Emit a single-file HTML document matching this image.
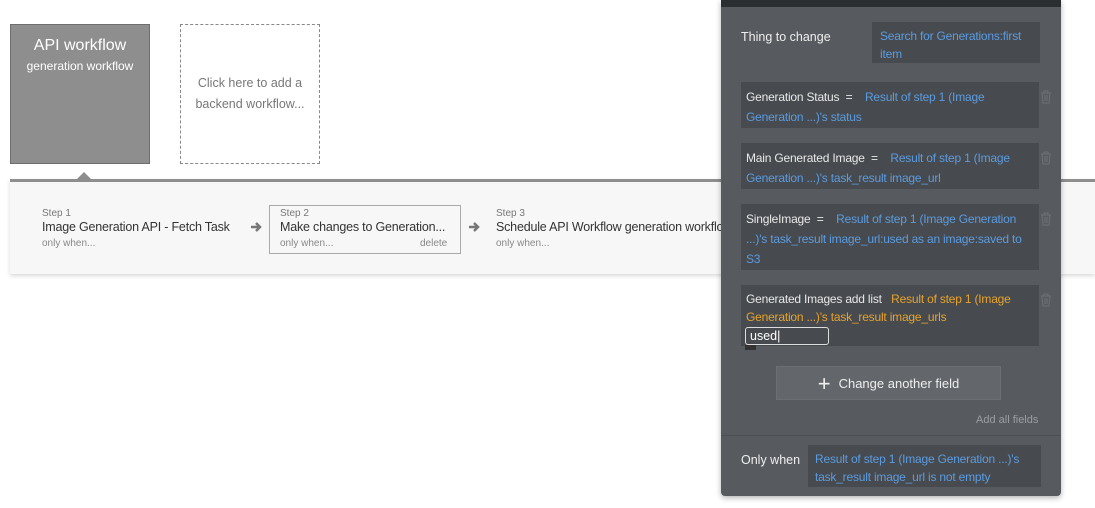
<!DOCTYPE html>
<html><head><style>
*{margin:0;padding:0;box-sizing:border-box}
body{width:1095px;height:508px;background:#fff;position:relative;overflow:hidden;font-family:"Liberation Sans",sans-serif;}
.a{position:absolute}
.blue{color:#5b9be0}
.row{position:absolute;left:741px;width:298px;background:#474b4f;color:#e8e8e8;font-size:12px;letter-spacing:-0.2px;line-height:20px;padding:5px 4px 0 5px}
.trash{position:absolute;left:1040px;width:12px;height:14px}
</style></head><body>
<div class="a" style="left:10px;top:24px;width:140px;height:140px;background:#8e8e8e;border:1px solid #6e6e6e;color:#fff;text-align:center">
<div style="font-size:16px;margin-top:12px">API workflow</div>
<div style="font-size:12px;margin-top:4px">generation workflow</div></div>
<div class="a" style="left:180px;top:24px;width:140px;height:140px;border:1px dashed #888;color:#777;text-align:center;font-size:12.5px;line-height:21px;padding-top:48px">Click here to add a<br>backend workflow...</div>
<div class="a" style="left:76px;top:172px;width:0;height:0;border-left:8px solid transparent;border-right:8px solid transparent;border-bottom:8px solid #8e8e8e"></div>
<div class="a" style="left:10px;top:179px;width:1085px;height:95px;background:#f7f7f7;border-top:3px solid #8e8e8e;box-shadow:0 2px 4px rgba(0,0,0,.15)"></div>
<div class="a" style="left:42px;top:208px;color:#777;font-size:10px">Step 1</div>
<div class="a" style="left:42px;top:220px;color:#333;font-size:12.5px;letter-spacing:-0.2px">Image Generation API - Fetch Task</div>
<div class="a" style="left:42px;top:238px;color:#888;font-size:10px">only when...</div>
<svg class="a" style="left:250px;top:221px" width="13" height="12" viewBox="0 0 13 12"><path d="M1 6h8M6 2l4 4-4 4" stroke="#777" stroke-width="2.5" fill="none"/></svg>
<div class="a" style="left:269px;top:205px;width:192px;height:49px;border:1px solid #aaa"></div>
<div class="a" style="left:280px;top:208px;color:#777;font-size:10px">Step 2</div>
<div class="a" style="left:280px;top:220px;color:#333;font-size:12.5px;letter-spacing:-0.2px">Make changes to Generation...</div>
<div class="a" style="left:280px;top:238px;color:#888;font-size:10px">only when...</div>
<div class="a" style="left:420px;top:238px;color:#888;font-size:10px">delete</div>
<svg class="a" style="left:468px;top:221px" width="13" height="12" viewBox="0 0 13 12"><path d="M1 6h8M6 2l4 4-4 4" stroke="#777" stroke-width="2.5" fill="none"/></svg>
<div class="a" style="left:496px;top:208px;color:#777;font-size:10px">Step 3</div>
<div class="a" style="left:496px;top:220px;color:#333;font-size:12.5px;letter-spacing:-0.2px;white-space:nowrap">Schedule API Workflow generation workflow</div>
<div class="a" style="left:496px;top:238px;color:#888;font-size:10px">only when...</div>

<div class="a" style="left:721px;top:0;width:340px;height:496px;background:#575b5f;border-radius:0 0 4px 4px;box-shadow:0 2px 6px rgba(0,0,0,.3)">
<div style="height:7px;background:#2b2e31"></div></div>
<div class="a" style="left:741px;top:30px;color:#eee;font-size:12.5px">Thing to change</div>
<div class="a blue" style="left:872px;top:22px;width:168px;height:41px;background:#474b4f;font-size:12px;letter-spacing:-0.2px;line-height:18px;padding:5px 4px 5px 8px">Search for Generations:first item</div>

<div class="row" style="top:82px;height:46px">Generation Status &nbsp;= &nbsp;&nbsp; <span class="blue">Result of step 1 (Image Generation ...)'s status</span></div>
<div class="row" style="top:143px;height:46px">Main Generated Image &nbsp;= &nbsp;&nbsp; <span class="blue">Result of step 1 (Image Generation ...)'s task_result image_url</span></div>
<div class="row" style="top:204px;height:66px">SingleImage &nbsp;= &nbsp;&nbsp; <span class="blue">Result of step 1 (Image Generation ...)'s task_result image_url:used as an image:saved to S3</span></div>
<div class="row" style="top:285px;height:61px;line-height:18px;padding-top:5px">Generated Images add list &nbsp;&nbsp;<span style="color:#e8a32a">Result of step 1 (Image Generation ...)'s task_result image_urls</span></div>
<div class="a" style="left:745px;top:327px;width:84px;height:18px;border:1px solid #ddd;border-radius:3px;color:#fff;font-size:12.5px;padding-left:4px;line-height:16px">used|</div>
<div class="a" style="left:745px;top:345px;width:11px;height:5px;background:#333"></div>
<svg class="trash" style="top:90px" viewBox="0 0 12 14"><path d="M1 3h10M4 3V1h4v2M2 3l1 10h6l1-10M5 5v6M7 5v6" stroke="#6d7175" fill="none"/></svg>
<svg class="trash" style="top:151px" viewBox="0 0 12 14"><path d="M1 3h10M4 3V1h4v2M2 3l1 10h6l1-10M5 5v6M7 5v6" stroke="#6d7175" fill="none"/></svg>
<svg class="trash" style="top:212px" viewBox="0 0 12 14"><path d="M1 3h10M4 3V1h4v2M2 3l1 10h6l1-10M5 5v6M7 5v6" stroke="#6d7175" fill="none"/></svg>
<svg class="trash" style="top:293px" viewBox="0 0 12 14"><path d="M1 3h10M4 3V1h4v2M2 3l1 10h6l1-10M5 5v6M7 5v6" stroke="#6d7175" fill="none"/></svg>

<div class="a" style="left:776px;top:366px;width:225px;height:34px;background:#63676b;border:1px solid #6b6f73;color:#eee;font-size:13px;line-height:34px;text-align:center"><span style="font-size:22px;vertical-align:-3px;margin-right:8px">+</span>Change another field</div>
<div class="a" style="left:976px;top:414px;color:#9a9ea2;font-size:11px">Add all fields</div>
<div class="a" style="left:721px;top:435px;width:340px;height:1px;background:#4c5054"></div>
<div class="a" style="left:741px;top:453px;color:#eee;font-size:12.5px">Only when</div>
<div class="a blue" style="left:808px;top:445px;width:233px;height:42px;background:#474b4f;font-size:12px;letter-spacing:-0.2px;line-height:18px;padding:5px 2px 5px 7px">Result of step 1 (Image Generation ...)'s task_result image_url is not empty</div>
</body></html>
